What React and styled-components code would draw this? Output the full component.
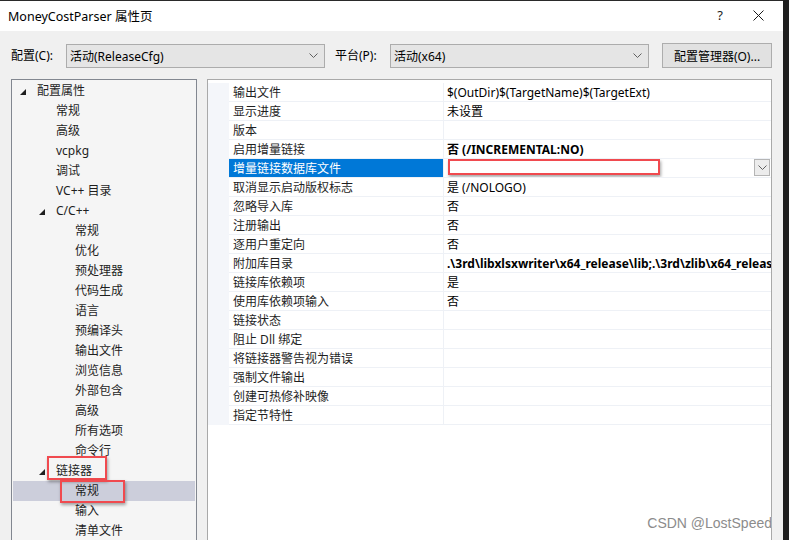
import React from "react";
import styled, { createGlobalStyle } from "styled-components";

const uiFont = `"Noto Sans", "Noto Sans CJK SC", sans-serif`;

const GlobalStyle = createGlobalStyle`
  html, body {
    margin: 0;
    padding: 0;
    background: #1f1f1f;
    overflow: hidden;
  }
  body {
    font-family: ${uiFont};
    font-size: 12px;
    color: #000;
  }
`;

// mark: outline drawn round a tree label, offsets in px from the label box
const treeItems = [
  { label: "配置属性", level: 0, open: true },
  { label: "常规", level: 1 },
  { label: "高级", level: 1 },
  { label: "vcpkg", level: 1 },
  { label: "调试", level: 1 },
  { label: "VC++ 目录", level: 1 },
  { label: "C/C++", level: 1, open: true },
  { label: "常规", level: 2 },
  { label: "优化", level: 2 },
  { label: "预处理器", level: 2 },
  { label: "代码生成", level: 2 },
  { label: "语言", level: 2 },
  { label: "预编译头", level: 2 },
  { label: "输出文件", level: 2 },
  { label: "浏览信息", level: 2 },
  { label: "外部包含", level: 2 },
  { label: "高级", level: 2 },
  { label: "所有选项", level: 2 },
  { label: "命令行", level: 2 },
  { label: "链接器", level: 1, open: true, mark: { l: 9, r: 15, t: 5, b: -1 } },
  { label: "常规", level: 2, selected: true, mark: { l: 15, r: 26, t: 1, b: 2 } },
  { label: "输入", level: 2 },
  { label: "清单文件", level: 2 },
];

const properties = [
  { name: "输出文件", value: "$(OutDir)$(TargetName)$(TargetExt)" },
  { name: "显示进度", value: "未设置" },
  { name: "版本", value: "" },
  { name: "启用增量链接", value: "否 (/INCREMENTAL:NO)", bold: true },
  { name: "增量链接数据库文件", value: "", selected: true },
  { name: "取消显示启动版权标志", value: "是 (/NOLOGO)" },
  { name: "忽略导入库", value: "否" },
  { name: "注册输出", value: "否" },
  { name: "逐用户重定向", value: "否" },
  {
    name: "附加库目录",
    value: ".\\3rd\\libxlsxwriter\\x64_release\\lib;.\\3rd\\zlib\\x64_release\\lib;%(AdditionalLibraryDirectories)",
    bold: true,
  },
  { name: "链接库依赖项", value: "是" },
  { name: "使用库依赖项输入", value: "否" },
  { name: "链接状态", value: "" },
  { name: "阻止 Dll 绑定", value: "" },
  { name: "将链接器警告视为错误", value: "" },
  { name: "强制文件输出", value: "" },
  { name: "创建可热修补映像", value: "" },
  { name: "指定节特性", value: "" },
];

const Chevron = () => (
  <svg width="9" height="6" viewBox="0 0 9 6">
    <polyline points="0.5,0.5 4.5,4.5 8.5,0.5" fill="none" stroke="#606060" strokeWidth="1" />
  </svg>
);

const Expander = () => (
  <svg width="6" height="6" viewBox="0 0 6 6">
    <polygon points="6,0 6,6 0,6" fill="#1e1e1e" />
  </svg>
);

const App = () => {
  return (
    <Screen>
      <GlobalStyle />
      <Dialog>
        <TitleBar>
          <Title>MoneyCostParser 属性页</Title>
          <TitleButtons>
            <HelpMark>?</HelpMark>
            <svg width="11" height="11" viewBox="0 0 11 11">
              <path d="M0.5 0.5 L10.5 10.5 M10.5 0.5 L0.5 10.5" stroke="#1a1a1a" strokeWidth="1" />
            </svg>
          </TitleButtons>
        </TitleBar>

        <Toolbar>
          <FieldLabel>配置(C):</FieldLabel>
          <Select>
            <span>活动(ReleaseCfg)</span>
            <Chevron />
          </Select>
          <FieldLabel $gap>平台(P):</FieldLabel>
          <Select>
            <span>活动(x64)</span>
            <Chevron />
          </Select>
          <ManagerButton>配置管理器(O)...</ManagerButton>
        </Toolbar>

        <Main>
          <Tree>
            {treeItems.map((item, i) => (
              <TreeRow key={i} $level={item.level} $selected={item.selected}>
                <ExpanderSlot>{item.open && <Expander />}</ExpanderSlot>
                <TreeLabel>
                  {item.label}
                  {item.mark && <LabelMark $m={item.mark} />}
                </TreeLabel>
              </TreeRow>
            ))}
          </Tree>

          <Grid>
            {properties.map((p, i) => (
              <PropRow key={i}>
                <Gutter />
                <NameCell $selected={p.selected}>{p.name}</NameCell>
                <ValueCell $bold={p.bold}>
                  {p.value}
                  {p.selected && (
                    <>
                      <MarkBox />
                      <DropButton>
                        <Chevron />
                      </DropButton>
                    </>
                  )}
                </ValueCell>
              </PropRow>
            ))}
          </Grid>
        </Main>

        <Watermark>CSDN @LostSpeed</Watermark>
      </Dialog>
    </Screen>
  );
};

const Screen = styled.div`
  display: flex;
  width: 789px;
  height: 540px;
  overflow: hidden;
`;

const Dialog = styled.div`
  position: relative;
  width: 783px;
  height: 539px;
  border-top: 1px solid #2a2a2a;
  background: #f0f0f0;
  display: flex;
  flex-direction: column;
  overflow: hidden;
`;

const TitleBar = styled.div`
  height: 30px;
  flex: none;
  background: #fff;
  display: flex;
  align-items: center;
  justify-content: space-between;
  padding: 0 19px 0 8px;
`;

const Title = styled.div`
  font-size: 12.5px;
  color: #000;
  margin-top: -2px;
`;

const TitleButtons = styled.div`
  display: flex;
  align-items: center;
  gap: 30px;
  margin-top: -2px;
`;

const HelpMark = styled.span`
  font-size: 13px;
  color: #1a1a1a;
`;

const Toolbar = styled.div`
  height: 48px;
  flex: none;
  display: flex;
  align-items: center;
  padding: 0 11px;
`;

const FieldLabel = styled.div`
  width: 55px;
  margin-left: ${({ $gap }) => ($gap ? "10px" : "0")};
  white-space: nowrap;
`;

const Select = styled.div`
  width: 259px;
  height: 24px;
  box-sizing: border-box;
  border: 1px solid #acacac;
  background: #e5e5e5;
  display: flex;
  align-items: center;
  justify-content: space-between;
  padding: 0 6px 0 3px;
  margin-top: 2px;
`;

const ManagerButton = styled.div`
  margin-left: 13px;
  width: 110px;
  height: 25px;
  box-sizing: border-box;
  border: 1px solid #adadad;
  background: #e1e1e1;
  display: flex;
  align-items: center;
  justify-content: center;
  margin-top: 1px;
`;

const Main = styled.div`
  flex: 1;
  display: flex;
  gap: 10px;
  padding: 0 11px;
  min-height: 0;
`;

const Tree = styled.div`
  width: 186px;
  box-sizing: border-box;
  border: 1px solid #828790;
  border-bottom: none;
  background: #f5f5f5;
  padding: 1px 1px 0;
`;

const TreeRow = styled.div`
  height: 20px;
  display: flex;
  align-items: center;
  padding-left: ${({ $level }) => 7 + $level * 19}px;
  background: ${({ $selected }) => ($selected ? "#cccedb" : "transparent")};
  color: #1e1e1e;
`;

const ExpanderSlot = styled.span`
  width: 17px;
  flex: none;
  display: flex;
  align-items: center;
  margin-top: 2px;
`;

const TreeLabel = styled.span`
  position: relative;
  line-height: 20px;
`;

const LabelMark = styled.span`
  position: absolute;
  left: ${({ $m }) => -$m.l}px;
  right: ${({ $m }) => -$m.r}px;
  top: ${({ $m }) => -$m.t}px;
  bottom: ${({ $m }) => -$m.b}px;
  border: 2px solid #f04a4f;
  box-shadow: 1px 2px 3px rgba(0, 0, 0, 0.35);
`;

const Grid = styled.div`
  flex: 1;
  box-sizing: border-box;
  border: 1px solid #a9a9a9;
  border-bottom: none;
  background: #fff;
  padding-top: 3px;
  overflow: hidden;
`;

const PropRow = styled.div`
  display: grid;
  grid-template-columns: 21px 215px 1fr;
  height: 19px;
`;

const Gutter = styled.div`
  background: #f4f6fa;
`;

const NameCell = styled.div`
  padding: 1px 0 0 4px;
  line-height: 17px;
  white-space: nowrap;
  border-right: 1px solid #eef1f6;
  border-bottom: 1px solid #eef1f6;
  background: ${({ $selected }) => ($selected ? "#0078d7" : "#fff")};
  color: ${({ $selected }) => ($selected ? "#fff" : "#1e1e1e")};
`;

const ValueCell = styled.div`
  position: relative;
  padding: 1px 0 0 3px;
  line-height: 17px;
  white-space: nowrap;
  overflow: hidden;
  border-bottom: 1px solid #eef1f6;
  font-weight: ${({ $bold }) => ($bold ? 700 : 400)};
  color: #000;
`;

const MarkBox = styled.div`
  position: absolute;
  left: 4px;
  top: 0;
  width: 212px;
  height: 16px;
  box-sizing: border-box;
  border: 2px solid #f04a4f;
  box-shadow: 1px 2px 3px rgba(0, 0, 0, 0.35);
`;

const DropButton = styled.div`
  position: absolute;
  right: 1px;
  top: 0;
  width: 16px;
  height: 17px;
  box-sizing: border-box;
  border: 1px solid #b5b5b5;
  background: #ececec;
  display: flex;
  align-items: center;
  justify-content: center;
`;

const Watermark = styled.div`
  position: absolute;
  right: 11px;
  bottom: 9px;
  font-family: "Liberation Sans", Arial, sans-serif;
  font-size: 14px;
  color: #8c8c8c;
  text-shadow: 0 0 1px #fff;
`;

export default App;
